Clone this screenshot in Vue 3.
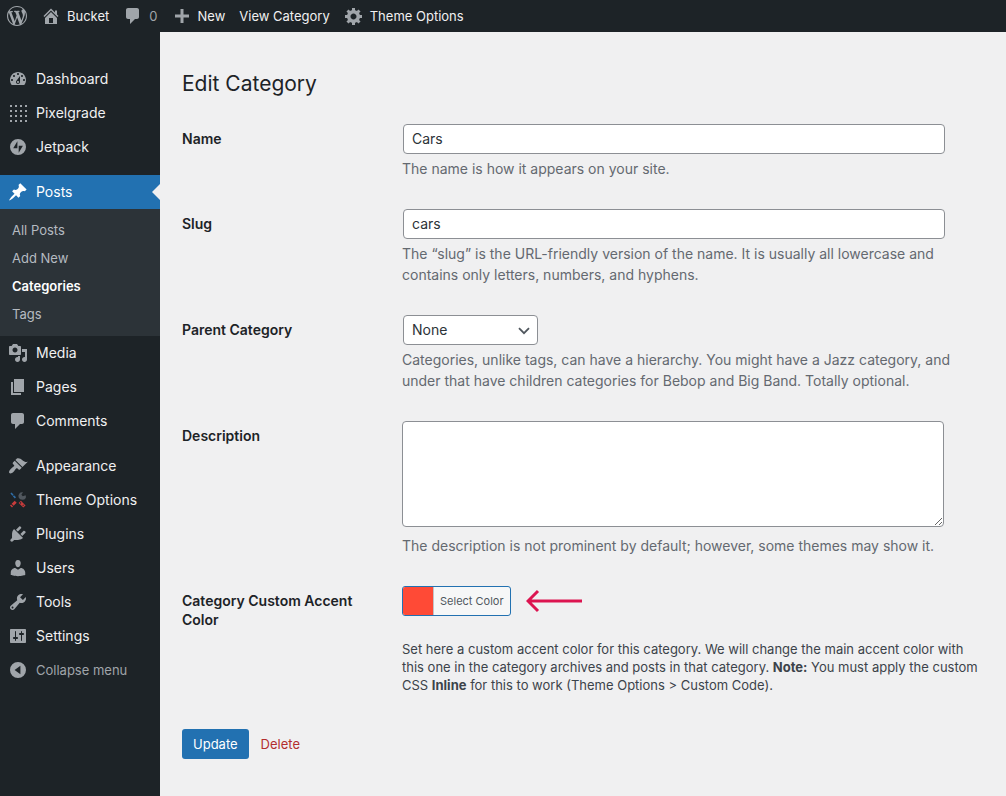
<script setup>
import { ref } from 'vue'

const icons = {
  wordpress: 'M20 10c0-5.51-4.49-10-10-10C4.48 0 0 4.49 0 10c0 5.52 4.48 10 10 10 5.51 0 10-4.48 10-10zM7.78 15.37L4.37 6.22c.55-.02 1.17-.08 1.17-.08.5-.06.44-1.13-.06-1.11 0 0-1.45.11-2.37.11-.18 0-.37 0-.58-.01C4.12 2.69 6.87 1.11 10 1.11c2.33 0 4.45.87 6.05 2.34-.68-.11-1.65.39-1.65 1.58 0 .74.45 1.36.9 2.1.35.61.55 1.36.55 2.46 0 1.49-1.4 5-1.4 5l-3.03-8.37c.54-.02.82-.17.82-.17.5-.05.44-1.25-.06-1.22 0 0-1.44.12-2.38.12-.87 0-2.33-.12-2.33-.12-.5-.03-.56 1.2-.06 1.22l.92.08 1.26 3.41zM17.41 10c.24-.64.74-1.87.43-4.25.7 1.29 1.05 2.71 1.05 4.25 0 3.29-1.73 6.24-4.4 7.78.97-2.59 1.94-5.2 2.92-7.78zM6.1 18.09C3.12 16.65 1.11 13.53 1.11 10c0-1.3.23-2.48.72-3.59C3.25 10.3 4.67 14.2 6.1 18.09zm4.03-6.63l2.58 6.98c-.86.29-1.76.45-2.71.45-.79 0-1.57-.11-2.29-.33.81-2.38 1.62-4.74 2.42-7.1z',
  home: 'M16 8.5l1.53 1.53-1.06 1.06L10 4.6l-6.47 6.49-1.06-1.06L10 2.5l4 4v-2h2v4zm-6-2.46l6 5.99V18H4v-5.97zM12 17v-5H8v5h4z',
  comment: 'M5 2h9c1.1 0 2 .9 2 2v7c0 1.1-.9 2-2 2h-2l-5 5v-5H5c-1.1 0-2-.9-2-2V4c0-1.1.9-2 2-2z',
  plus: 'M17 8.5v3h-5.5V17h-3v-5.5H3v-3h5.5V3h3v5.5H17z',
  gear: 'M18 12h-2.18c-.17.7-.44 1.35-.81 1.93l1.54 1.54-2.1 2.1-1.54-1.54c-.58.36-1.23.63-1.91.79V19H8v-2.18c-.68-.16-1.33-.43-1.91-.79l-1.54 1.54-2.12-2.12 1.54-1.54c-.36-.58-.63-1.23-.79-1.91H1V9.03h2.17c.16-.7.44-1.35.8-1.94L2.43 5.55l2.1-2.1 1.54 1.54c.58-.37 1.24-.64 1.93-.81V2h3v2.18c.68.16 1.33.43 1.91.79l1.54-1.54 2.12 2.12-1.54 1.54c.36.59.64 1.24.8 1.94H18V12zm-8.5 1.5c1.66 0 3-1.34 3-3s-1.34-3-3-3-3 1.34-3 3 1.34 3 3 3z',
  dashboard: 'M3.76 16h12.48c1.1-1.37 1.76-3.11 1.76-5 0-4.42-3.58-8-8-8s-8 3.58-8 8c0 1.89.66 3.63 1.76 5zM10 4c.55 0 1 .45 1 1s-.45 1-1 1-1-.45-1-1 .45-1 1-1zM6 6c.55 0 1 .45 1 1s-.45 1-1 1-1-.45-1-1 .45-1 1-1zm8 0c.55 0 1 .45 1 1s-.45 1-1 1-1-.45-1-1 .45-1 1-1zm-5.37 5.55L12 7v6c0 1.1-.9 2-2 2s-2-.9-2-2c0-.57.24-1.08.63-1.45zM4 10c.55 0 1 .45 1 1s-.45 1-1 1-1-.45-1-1 .45-1 1-1zm12 0c.55 0 1 .45 1 1s-.45 1-1 1-1-.45-1-1 .45-1 1-1zm-5 3c0-.55-.45-1-1-1s-1 .45-1 1 .45 1 1 1 1-.45 1-1z',
  pixelgrade: [2, 7, 12, 17].map((y) => [2, 7, 12, 17].map((x) => `M${x} ${y}h2v2h-2z`).join('')).join(''),
  jetpack: 'M10 2a8 8 0 1 0 0 16 8 8 0 0 0 0-16zM9.4 11.2H5.2L9.4 4.2zM10.7 15.8V8.8h4.2z',
  pin: 'M10.44 3.02l1.82-1.82 6.36 6.35-1.83 1.82c-1.05-.68-2.48-.57-3.41.36l-.75.75c-.92.93-1.04 2.35-.35 3.41l-1.83 1.82-2.41-2.41-2.8 2.79c-.42.42-3.38 2.71-3.8 2.29s1.86-3.39 2.28-3.81l2.79-2.79L4.1 9.36l1.83-1.82c1.05.69 2.48.57 3.4-.36l.75-.75c.93-.92 1.05-2.35.36-3.41z',
  media: 'M13 11V4c0-.55-.45-1-1-1h-1.67L9 1H5L3.67 3H2c-.55 0-1 .45-1 1v7c0 .55.45 1 1 1h10c.55 0 1-.45 1-1zM7 4.5c1.38 0 2.5 1.12 2.5 2.5S8.38 9.5 7 9.5 4.5 8.38 4.5 7 5.62 4.5 7 4.5zM14 6h5v10.5c0 1.38-1.12 2.5-2.5 2.5S14 17.88 14 16.5s1.12-2.5 2.5-2.5c.17 0 .34.02.5.05V9h-3V6zm-4 8.05V13h2v3.5c0 1.38-1.12 2.5-2.5 2.5S7 17.88 7 16.5 8.12 14 9.5 14c.17 0 .34.02.5.05z',
  page: 'M6 15V2h10v13H6zm-1 1h8v2H3V5h2v11z',
  brush: 'M14.48 11.06L7.41 3.99l1.5-1.5c.5-.56 2.3-.47 3.51.32 1.21.8 1.43 1.28 2.91 2.1 1.18.64 2.45 1.26 4.45.85zm-.71.71L6.7 4.7 4.93 6.47c-.39.39-.39 1.02 0 1.41l1.06 1.06c.39.39.39 1.03 0 1.42-.6.6-1.43 1.11-2.21 1.69-.35.26-.7.53-1.01.84C1.43 14.23.4 16.08 1.4 17.07c.99 1 2.84-.03 4.18-1.36.31-.31.58-.66.85-1.02.57-.78 1.08-1.61 1.69-2.21.39-.39 1.02-.39 1.41 0l1.06 1.06c.39.39 1.02.39 1.41 0z',
  plug: 'M13.11 4.36L9.87 7.6 8 5.73l3.24-3.24c.35-.34 1.05-.2 1.56.32.52.51.66 1.21.31 1.55zm-8 1.77l.91-1.12 9.01 9.01-1.19.84c-.71.71-2.63 1.16-3.82 1.16H6.14L4.9 17.26c-.59.59-1.54.59-2.12 0-.59-.58-.59-1.53 0-2.12l1.24-1.24v-3.88c0-1.13.4-3.19 1.09-3.89zm7.26 3.97l3.24-3.24c.34-.35 1.04-.21 1.55.31.52.51.66 1.21.31 1.55l-3.24 3.25z',
  user: 'M10 9.25c-2.27 0-2.73-3.44-2.73-3.44C7 4.02 7.82 2 9.97 2c2.16 0 2.98 2.02 2.71 3.81 0 0-.41 3.44-2.68 3.44zm0 2.57L12.72 10c2.39 0 4.52 2.33 4.52 4.53v2.49s-3.65 1.13-7.24 1.13c-3.65 0-7.24-1.13-7.24-1.13v-2.49c0-2.25 1.94-4.48 4.47-4.48z',
  wrench: 'M16.68 9.77c-1.34 1.34-3.3 1.67-4.95.99l-5.41 6.52c-.99.99-2.59.99-3.58 0s-.99-2.59 0-3.57l6.52-5.42c-.68-1.65-.35-3.61.99-4.95 1.28-1.28 3.12-1.62 4.72-1.06l-2.89 2.89 2.82 2.82 2.86-2.87c.53 1.58.18 3.39-1.08 4.65zM3.81 16.21c.4.39 1.04.39 1.43 0 .4-.4.4-1.04 0-1.43-.39-.4-1.03-.4-1.43 0-.39.39-.39 1.03 0 1.43z',
  sliders: 'M18 16V4c0-.55-.45-1-1-1H3c-.55 0-1 .45-1 1v12c0 .55.45 1 1 1h14c.55 0 1-.45 1-1zM8 11h1c.55 0 1 .45 1 1s-.45 1-1 1H8v1.5c0 .28-.22.5-.5.5s-.5-.22-.5-.5V13H6c-.55 0-1-.45-1-1s.45-1 1-1h1V5.5c0-.28.22-.5.5-.5s.5.22.5.5V11zm5-2h-1c-.55 0-1-.45-1-1s.45-1 1-1h1V5.5c0-.28.22-.5.5-.5s.5.22.5.5V7h1c.55 0 1 .45 1 1s-.45 1-1 1h-1v5.5c0 .28-.22.5-.5.5s-.5-.22-.5-.5V9z',
  collapse: 'M10 2a8 8 0 1 0 0 16 8 8 0 0 0 0-16zM12.4 5.8v8.4L6.6 10z'
}

const barLinks = [
  { icon: 'wordpress', name: 'About WordPress' },
  { icon: 'home', text: 'Bucket' },
  { icon: 'comment', text: '0', muted: true },
  { icon: 'plus', text: 'New' },
  { text: 'View Category' },
  { icon: 'gear', text: 'Theme Options' }
]

const menuGroups = [
  [
    { icon: 'dashboard', text: 'Dashboard' },
    { icon: 'pixelgrade', text: 'Pixelgrade' },
    { icon: 'jetpack', text: 'Jetpack' }
  ],
  [
    { icon: 'pin', text: 'Posts', current: true, children: ['All Posts', 'Add New', 'Categories', 'Tags'] },
    { icon: 'media', text: 'Media' },
    { icon: 'page', text: 'Pages' },
    { icon: 'comment', text: 'Comments' }
  ],
  [
    { icon: 'brush', text: 'Appearance' },
    { icon: 'tools', text: 'Theme Options' },
    { icon: 'plug', text: 'Plugins' },
    { icon: 'user', text: 'Users' },
    { icon: 'wrench', text: 'Tools' },
    { icon: 'sliders', text: 'Settings' }
  ]
]

const name = ref('Cars')
const slug = ref('cars')
const parent = ref('None')
const description = ref('')
</script>

<template>
  <div class="admin">
    <nav class="bar" aria-label="Toolbar">
      <a v-for="link in barLinks" :key="link.icon || link.text" href="#" class="bar-link" :class="{ muted: link.muted }" :aria-label="link.name">
        <svg v-if="link.icon" class="icon" viewBox="0 0 20 20" aria-hidden="true"><path fill-rule="evenodd" :d="icons[link.icon]" /></svg>
        <span v-if="link.text">{{ link.text }}</span>
      </a>
    </nav>

    <div class="body">
      <nav class="menu" aria-label="Main menu">
        <ul v-for="(group, i) in menuGroups" :key="i" class="group">
          <li v-for="item in group" :key="item.text">
            <a href="#" class="menu-link" :class="{ current: item.current }">
              <svg v-if="item.icon === 'tools'" class="icon" viewBox="0 0 20 20" aria-hidden="true">
                <path d="M3 3l4.5 5" stroke="#2f6ea8" stroke-width="1.6" fill="none" stroke-dasharray="3 0.6" />
                <path d="M7.7 11.7L3 16.5" stroke="#c93c3c" stroke-width="2.8" fill="none" stroke-dasharray="4.4 0.8" />
                <path d="M11.8 11.8l4.6 4.7" stroke="#c93c3c" stroke-width="3.2" fill="none" />
                <path d="M12.2 12.5l.8.8M14.8 15l.7.7" stroke="#1d2327" stroke-width="1.2" fill="none" />
                <path d="M17.6 5.2l-2.8 1-1.4-1.5 1.6-2.4a3.8 3.8 0 0 0-4.2 5.4 4 4 0 0 0 7 .2 4 4 0 0 0-.2-2.7z" fill="#50575e" />
              </svg>
              <svg v-else class="icon" viewBox="0 0 20 20" aria-hidden="true"><path fill-rule="evenodd" :d="icons[item.icon]" /></svg>
              <span>{{ item.text }}</span>
            </a>
            <ul v-if="item.children" class="submenu">
              <li v-for="child in item.children" :key="child">
                <a href="#" :class="{ active: child === 'Categories' }">{{ child }}</a>
              </li>
            </ul>
          </li>
        </ul>
        <button type="button" class="menu-link collapse">
          <svg class="icon" viewBox="0 0 20 20" aria-hidden="true"><path fill-rule="evenodd" :d="icons.collapse" /></svg>
          <span>Collapse menu</span>
        </button>
      </nav>

      <main class="content">
        <h1>Edit Category</h1>
        <form @submit.prevent>
          <div class="row">
            <label for="name">Name</label>
            <div class="field">
              <input id="name" v-model="name" type="text" />
              <p>The name is how it appears on your site.</p>
            </div>
          </div>
          <div class="row">
            <label for="slug">Slug</label>
            <div class="field">
              <input id="slug" v-model="slug" type="text" />
              <p>The “slug” is the URL-friendly version of the name. It is usually all lowercase and contains only letters, numbers, and hyphens.</p>
            </div>
          </div>
          <div class="row">
            <label for="parent">Parent Category</label>
            <div class="field">
              <div class="select">
                <select id="parent" v-model="parent">
                  <option>None</option>
                </select>
                <svg viewBox="0 0 12 8" aria-hidden="true"><path d="M1 1.2l5 5 5-5" fill="none" stroke="#50575e" stroke-width="1.8" /></svg>
              </div>
              <p>Categories, unlike tags, can have a hierarchy. You might have a Jazz category, and under that have children categories for Bebop and Big Band. Totally optional.</p>
            </div>
          </div>
          <div class="row">
            <label for="description">Description</label>
            <div class="field">
              <textarea id="description" v-model="description"></textarea>
              <p>The description is not prominent by default; however, some themes may show it.</p>
            </div>
          </div>
          <div class="row">
            <label for="accent">Category Custom Accent Color</label>
            <div class="field">
              <div class="picker">
                <button id="accent" type="button" class="color"><span class="swatch"></span><span class="color-text">Select Color</span></button>
                <svg class="arrow" viewBox="0 0 56 24" aria-hidden="true"><path d="M56 12H2M12 2L2 12l10 10" fill="none" stroke="#dc1450" stroke-width="3" /></svg>
              </div>
              <p class="note">Set here a custom accent color for this category. We will change the main accent color with this one in the category archives and posts in that category. <strong>Note:</strong> You must apply the custom CSS <strong>Inline</strong> for this to work (Theme Options &gt; Custom Code).</p>
            </div>
          </div>
          <div class="actions">
            <button type="submit" class="update">Update</button>
            <a href="#" class="delete">Delete</a>
          </div>
        </form>
      </main>
    </div>
  </div>
</template>

<style>
body {
  margin: 0;
  background: #f0f0f1;
}
</style>

<style scoped>
.admin {
  min-height: 100vh;
  display: flex;
  flex-direction: column;
  font-family: Inter, "Liberation Sans", sans-serif;
  font-size: 14px;
  color: #1d2327;
}
.admin * {
  box-sizing: border-box;
}
a {
  text-decoration: none;
}
ul {
  margin: 0;
  padding: 0;
  list-style: none;
}
button,
input,
select,
textarea {
  font-family: inherit;
}
.icon {
  width: 20px;
  height: 20px;
  flex: none;
  fill: #a0a5aa;
}
.bar {
  height: 32px;
  display: flex;
  align-items: center;
  gap: 14px;
  padding: 0 7px;
  background: #1d2327;
  font-size: 13px;
}
.bar-link {
  display: flex;
  align-items: center;
  gap: 6px;
  color: #f0f0f1;
  white-space: nowrap;
}
.muted {
  color: #a0a5aa;
}
.body {
  flex: 1;
  display: flex;
}
.menu {
  width: 160px;
  flex: none;
  padding-top: 30px;
  background: #1d2327;
}
.group + .group {
  margin-top: 11px;
}
.menu-link {
  position: relative;
  height: 34px;
  display: flex;
  align-items: center;
  gap: 8px;
  padding: 0 8px;
  color: #f0f0f1;
  white-space: nowrap;
}
.menu-link span {
  padding-bottom: 1px;
}
.current {
  background: #2271b1;
  color: #fff;
}
.current .icon {
  fill: #fff;
}
.current::after {
  content: "";
  position: absolute;
  right: 0;
  top: 9px;
  border: 8px solid transparent;
  border-left: 0;
  border-right-color: #f0f0f1;
}
.submenu {
  padding: 7px 0 8px;
  background: #2c3338;
  font-size: 13px;
}
.submenu a {
  display: block;
  padding: 0 12px;
  line-height: 28px;
  color: #b5bbc1;
}
.submenu .active {
  color: #fff;
  font-weight: 600;
}
.collapse {
  width: 100%;
  border: 0;
  background: none;
  font-size: 13px;
  color: #a0a5aa;
}
.content {
  flex: 1;
  min-width: 0;
  padding: 37px 20px 37px 22px;
}
h1 {
  margin: 0 0 25px;
  font-size: 21px;
  font-weight: 400;
  line-height: 30px;
}
.row {
  display: grid;
  grid-template-columns: 190px minmax(0, 1fr);
  column-gap: 30px;
  margin-bottom: 30px;
}
label {
  padding-top: 5px;
  font-weight: 600;
  line-height: 19px;
}
input,
textarea,
select {
  display: block;
  border: 1px solid #8c8f94;
  border-radius: 4px;
  background: #fff;
  color: #2c3338;
  font-size: 14px;
}
input,
textarea {
  width: calc(100% - 42px);
}
input {
  height: 30px;
  margin: 0 1px;
  padding: 0 8px 1px;
}
textarea {
  height: 106px;
  padding: 2px 6px;
  resize: both;
}
.select {
  position: relative;
  width: 135px;
  margin: 0 1px;
}
select {
  width: 100%;
  height: 30px;
  padding: 0 24px 1px 8px;
  appearance: none;
}
.select svg {
  position: absolute;
  right: 8px;
  top: 12px;
  width: 12px;
  height: 8px;
  pointer-events: none;
}
p {
  margin: 4px 0 0;
  line-height: 21px;
  color: #646970;
}
textarea + p {
  margin-top: 8px;
}
.picker {
  display: flex;
  align-items: center;
  gap: 15px;
}
.color {
  height: 30px;
  display: flex;
  padding: 0;
  overflow: hidden;
  border: 1px solid #2271b1;
  border-radius: 3px;
  background: #f6f7f7;
  color: #50575e;
  font-size: 11px;
  line-height: 28px;
}
.swatch {
  width: 30px;
  height: 28px;
  background: #ff4a36;
}
.color-text {
  padding: 0 6px;
  border-left: 1px solid #c3c4c7;
}
.arrow {
  width: 56px;
  height: 24px;
}
.note {
  margin-top: 24px;
  font-size: 13px;
  line-height: 18px;
  color: #3c434a;
}
.actions {
  display: flex;
  align-items: center;
  gap: 12px;
  padding-top: 5px;
  font-size: 13px;
}
.update {
  height: 30px;
  padding: 0 11px;
  border: 0;
  border-radius: 3px;
  background: #2271b1;
  color: #fff;
  font-size: 13px;
}
.delete {
  color: #b32d2e;
}
</style>
